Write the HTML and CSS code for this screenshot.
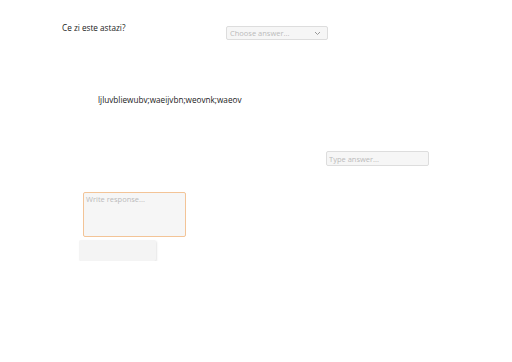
FILE: index.html
```html
<!DOCTYPE html>
<html lang="en">

<head>
    <meta charset="UTF-8">
    <meta name="viewport" content="width=device-width, initial-scale=1.0">
    <title>Quiz</title>
    <link rel="stylesheet" href="styles.css">
</head>

<body>
    <div class="page">
        <div class="question-row">
            <span class="question">Ce zi este astazi?</span>
            <div class="select">
                <span class="select-text">Choose answer...</span>
                <svg class="chevron" width="7" height="5" viewBox="0 0 7 5">
                    <path d="M1 1 L3.5 3.5 L6 1" fill="none" stroke="#999" stroke-width="1"/>
                </svg>
            </div>
        </div>

        <p class="statement">ljluvbliewubv;waeijvbn;weovnk;waeov</p>

        <input type="text" class="answer" placeholder="Type answer..." spellcheck="false">

        <textarea class="response" placeholder="Write response..." spellcheck="false"></textarea>

        <button type="button" class="submit"></button>
    </div>
</body>
</html>
```

FILE: styles.css
```css
body {
    margin: 0;
    font-family: 'Open Sans', sans-serif;
    font-variant-ligatures: none;
    background-color: #fff;
    color: #222;
}

.page {
    display: flex;
    flex-direction: column;
    align-items: flex-start;
    padding: 21px 0 0 62px;
}

.question-row {
    display: flex;
    align-items: flex-start;
}

.question {
    width: 164px;
    font-size: 8.2px;
    line-height: 13px;
}

.select {
    display: flex;
    align-items: center;
    justify-content: space-between;
    box-sizing: border-box;
    width: 102px;
    height: 14px;
    margin-top: 5px;
    padding: 0 6px 0 3px;
    background-color: #f6f6f6;
    border: 1px solid #ddd;
    border-radius: 2px;
}

.select-text {
    font-size: 7.5px;
    color: #bbb;
}

.statement {
    margin: 53px 0 0 36px;
    font-size: 8.2px;
    line-height: 13px;
}

.answer,
.response {
    box-sizing: border-box;
    font-family: 'Open Sans', sans-serif;
    font-size: 7.5px;
    color: #222;
    background-color: #f6f6f6;
    border: 1px solid #ddd;
    border-radius: 2px;
    padding: 0 2px;
    outline: none;
}

.answer::placeholder,
.response::placeholder {
    color: #bbb;
}

.answer {
    width: 103px;
    height: 15px;
    margin: 45px 0 0 264px;
}

.response {
    width: 103px;
    height: 45px;
    margin: 26px 0 0 21px;
    padding-top: 1px;
    border: 1px solid #f3c497;
    resize: none;
}

.submit {
    width: 77px;
    height: 21px;
    margin: 3px 0 0 17px;
    background-color: #f4f4f4;
    border: none;
    border-radius: 2px;
    box-shadow: 1px 1px 2px rgba(0, 0, 0, 0.1);
}
```
